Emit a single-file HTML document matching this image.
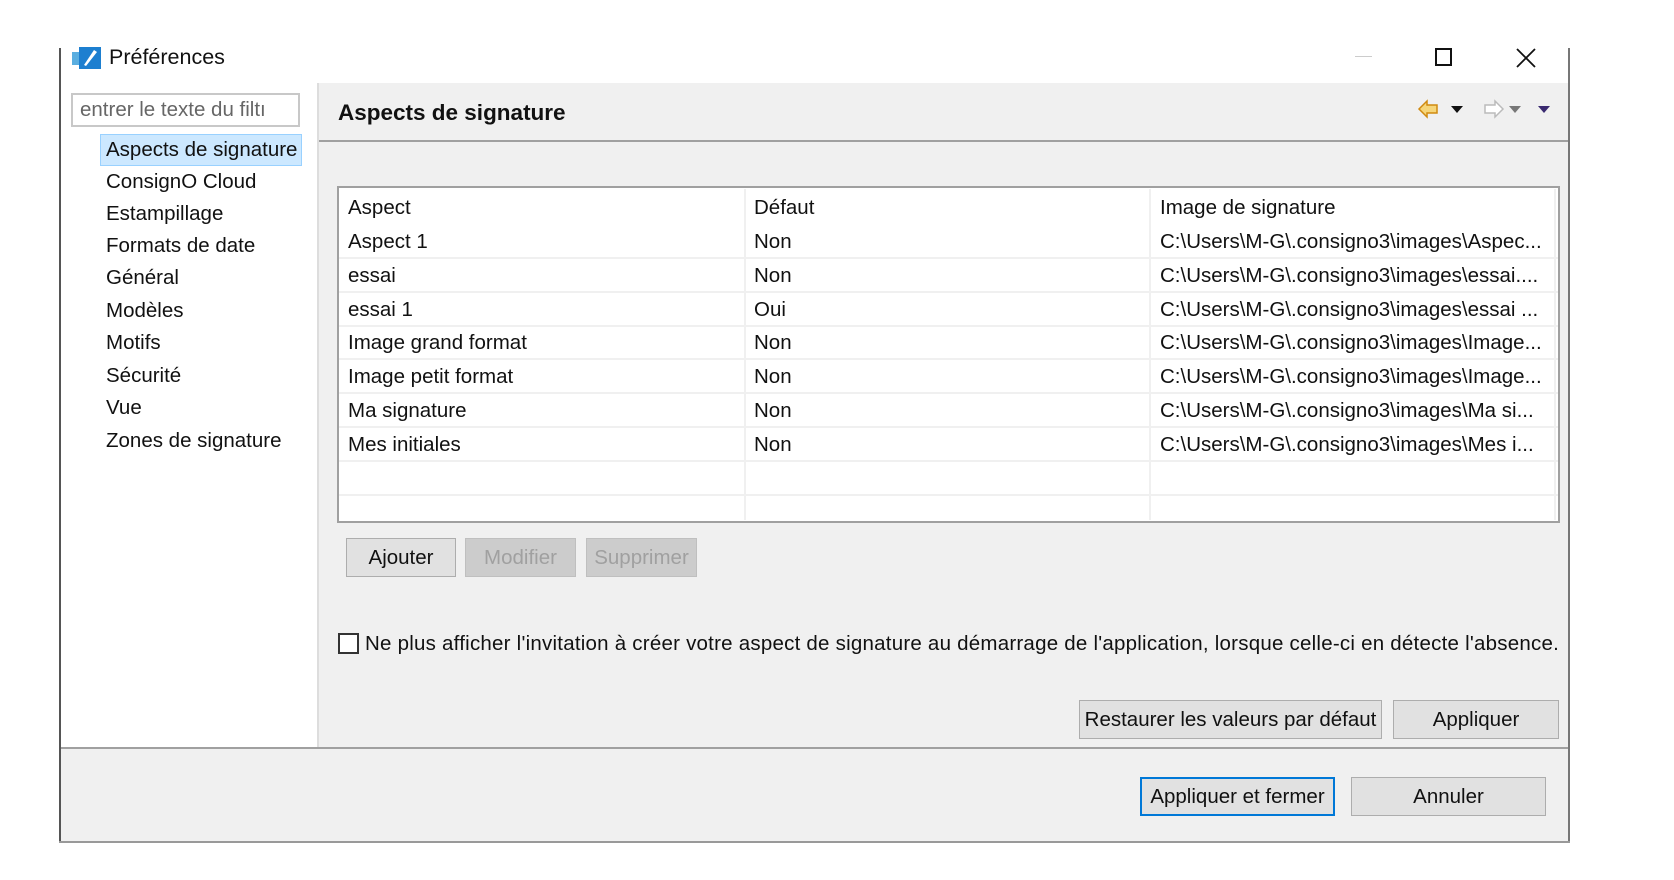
<!DOCTYPE html>
<html><head><meta charset="utf-8"><style>
*{margin:0;padding:0;box-sizing:border-box}
body{width:1674px;height:880px;background:#fff;position:relative;overflow:hidden;font-family:"Liberation Sans",sans-serif;font-size:20.5px;color:#111}
.a{position:absolute}
.btn{position:absolute;background:#e1e1e1;border:1px solid #adadad;display:flex;align-items:center;justify-content:center}
.dis{color:#a0a0a0;background:#cccccc;border-color:#bfbfbf}
.it{position:absolute;left:106px}
.row{position:absolute;left:339px;width:1219px;height:34px;border-bottom:2px solid #f0f0f0}
.row span{position:absolute;top:5px}
</style></head><body>
<div class="a" style="left:59px;top:48px;width:2px;height:795px;background:#555"></div>
<div class="a" style="left:1568px;top:48px;width:2px;height:795px;background:#777"></div>
<div class="a" style="left:59px;top:841px;width:1511px;height:2px;background:#999"></div>
<svg class="a" style="left:72px;top:45px" width="32" height="26"><rect x="0" y="7" width="7" height="13" fill="#5aaee0"/><rect x="7" y="2" width="22" height="22" fill="#1d7fd0"/><path d="M12 20 L22 5 L25 7 L14 21Z" fill="#fff"/></svg>
<div class="a" style="left:109px;top:45px;font-size:21.5px">Préférences</div>
<div class="a" style="left:1355px;top:56px;width:17px;height:1px;background:#ccc"></div>
<div class="a" style="left:1435px;top:48px;width:17px;height:18px;border:2px solid #111"></div>
<svg class="a" style="left:1515px;top:47px" width="22" height="22"><path d="M2 2L20 20M20 2L2 20" stroke="#111" stroke-width="1.8"/></svg>
<div class="a" style="left:71px;top:93px;width:229px;height:34px;border:2px solid #c8c8c8;background:#fff"></div>
<div class="a" style="left:80px;top:98px;color:#666">entrer le texte du filtı</div>
<div class="a" style="left:100px;top:134px;width:202px;height:32px;background:#cce8ff;border:1px solid #99d1ff"></div>
<div class="it" style="top:138px">Aspects de signature</div>
<div class="it" style="top:170px">ConsignO Cloud</div>
<div class="it" style="top:202px">Estampillage</div>
<div class="it" style="top:234px">Formats de date</div>
<div class="it" style="top:266px">Général</div>
<div class="it" style="top:299px">Modèles</div>
<div class="it" style="top:331px">Motifs</div>
<div class="it" style="top:364px">Sécurité</div>
<div class="it" style="top:396px">Vue</div>
<div class="it" style="top:429px">Zones de signature</div>
<div class="a" style="left:317px;top:83px;width:2px;height:665px;background:#ddd"></div>
<div class="a" style="left:319px;top:83px;width:1249px;height:665px;background:#f0f0f0"></div>
<div class="a" style="left:338px;top:100px;font-weight:bold;font-size:22.5px">Aspects de signature</div>
<div class="a" style="left:319px;top:140px;width:1249px;height:2px;background:#a0a0a0"></div>
<svg class="a" style="left:1416px;top:98px" width="140" height="22">
<path d="M3 11L11 3V7H21V15H11V19Z" fill="#f6d67a" stroke="#d08a10" stroke-width="1.5"/>
<path d="M35 8H47L41 15Z" fill="#111"/>
<path d="M87 11L79 3V7H69V15H79V19Z" fill="#fff" stroke="#bbb" stroke-width="1.5"/>
<path d="M93 8H105L99 15Z" fill="#777"/>
<path d="M122 8H134L128 15Z" fill="#3a2a70"/>
</svg>
<div class="a" style="left:337px;top:186px;width:1223px;height:337px;background:#fff;border:2px solid #a0a0a0"></div>
<div class="a" style="left:744px;top:189px;width:2px;height:331px;background:#f0f0f0"></div>
<div class="a" style="left:1149px;top:189px;width:2px;height:331px;background:#f0f0f0"></div>
<div class="a" style="left:1554px;top:189px;width:2px;height:331px;background:#f0f0f0"></div>
<div class="row" style="top:190px;border-bottom:none"><span style="left:9px;top:6px">Aspect</span><span style="left:415px;top:6px">Défaut</span><span style="left:821px;top:6px">Image de signature</span></div>
<div class="row" style="top:225px"><span style="left:9px">Aspect 1</span><span style="left:415px">Non</span><span style="left:821px">C:\Users\M-G\.consigno3\images\Aspec...</span></div>
<div class="row" style="top:259px"><span style="left:9px">essai</span><span style="left:415px">Non</span><span style="left:821px">C:\Users\M-G\.consigno3\images\essai....</span></div>
<div class="row" style="top:293px"><span style="left:9px">essai 1</span><span style="left:415px">Oui</span><span style="left:821px">C:\Users\M-G\.consigno3\images\essai ...</span></div>
<div class="row" style="top:326px"><span style="left:9px">Image grand format</span><span style="left:415px">Non</span><span style="left:821px">C:\Users\M-G\.consigno3\images\Image...</span></div>
<div class="row" style="top:360px"><span style="left:9px">Image petit format</span><span style="left:415px">Non</span><span style="left:821px">C:\Users\M-G\.consigno3\images\Image...</span></div>
<div class="row" style="top:394px"><span style="left:9px">Ma signature</span><span style="left:415px">Non</span><span style="left:821px">C:\Users\M-G\.consigno3\images\Ma si...</span></div>
<div class="row" style="top:428px"><span style="left:9px">Mes initiales</span><span style="left:415px">Non</span><span style="left:821px">C:\Users\M-G\.consigno3\images\Mes i...</span></div>
<div class="row" style="top:462px"></div>
<div class="btn" style="left:346px;top:538px;width:110px;height:39px">Ajouter</div>
<div class="btn dis" style="left:465px;top:538px;width:111px;height:39px">Modifier</div>
<div class="btn dis" style="left:586px;top:538px;width:111px;height:39px">Supprimer</div>
<div class="a" style="left:338px;top:633px;width:21px;height:21px;border:2px solid #333;background:#fff"></div>
<div class="a" style="left:365px;top:632px;letter-spacing:0.23px">Ne plus afficher l'invitation à créer votre aspect de signature au démarrage de l'application, lorsque celle-ci en détecte l'absence.</div>
<div class="btn" style="left:1079px;top:700px;width:303px;height:39px">Restaurer les valeurs par défaut</div>
<div class="btn" style="left:1393px;top:700px;width:166px;height:39px">Appliquer</div>
<div class="a" style="left:61px;top:747px;width:1507px;height:2px;background:#a0a0a0"></div>
<div class="a" style="left:61px;top:749px;width:1507px;height:92px;background:#f0f0f0"></div>
<div class="btn" style="left:1140px;top:777px;width:195px;height:39px;border:2px solid #0078d7">Appliquer et fermer</div>
<div class="btn" style="left:1351px;top:777px;width:195px;height:39px">Annuler</div>
</body></html>
